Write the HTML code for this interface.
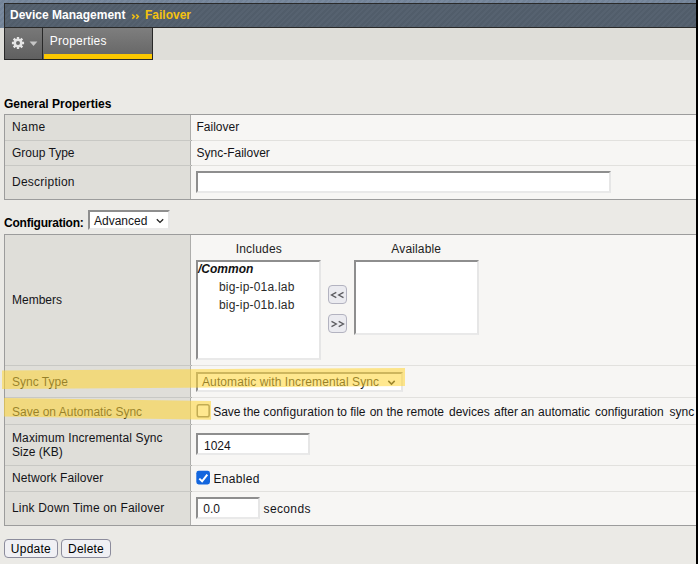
<!DOCTYPE html>
<html><head><meta charset="utf-8">
<style>
*{box-sizing:border-box;margin:0;padding:0}
html,body{width:698px;height:564px;overflow:hidden}
body{background:#ebeae6;font-family:"Liberation Sans",sans-serif;font-size:12px;line-height:14px;color:#141418;position:relative}
.a{position:absolute;white-space:nowrap}
#topbg{left:0;top:0;width:698px;height:28px;background:#74859a;
 background-image:repeating-linear-gradient(135deg,rgba(255,255,255,0.035) 0 2px,rgba(0,0,0,0.02) 2px 4px)}
#hdr{left:4px;top:3px;width:700px;height:25px;background:#535f6d;border:1px solid #2a2a2a;
 background-image:repeating-linear-gradient(135deg,rgba(255,255,255,0.02) 0 2px,rgba(0,0,0,0.025) 2px 4px)}
#tabbar{left:0;top:28px;width:698px;height:32px;background:#dfded9}
#gear{left:4px;top:27px;width:39px;height:33px;background:linear-gradient(#787878,#606060);border:1px solid #282828}
#tab{left:42px;top:27px;width:111px;height:33px;background:linear-gradient(#7e7e7e,#646464);border:1px solid #282828}
#tab i{position:absolute;left:1px;right:0;bottom:0;height:5px;background:#fcc800}
#rb{left:696px;top:0;width:2px;height:564px;background:#000}
.box{position:absolute;left:4px;width:700px;border:1px solid #9c9c9c;background:#f7f6f4}
.lc{position:absolute;left:0;top:0;bottom:0;width:186px;background:#dfded9;border-right:1px solid #adadab}
.hl{position:absolute;left:0;width:700px;height:1px;background:linear-gradient(90deg,#c8c8c4 0,#c8c8c4 186px,#adadab 186px,#adadab 187px,#e2e1de 187px)}
.t{position:absolute;border:2px solid;border-color:#8e8e8e #e6e6e6 #e9e9e9 #8e8e8e;background:#fff}
.btn{position:absolute;border:1px solid #8c8c9c;border-radius:4px;background:#f0f0f4}
</style></head><body>
<div id="topbg" class="a"></div>
<div id="hdr" class="a"></div>
<div class="a" style="left:10px;top:8px;font-weight:bold;color:#fff">Device Management</div>
<svg class="a" style="left:131px;top:13px" width="9" height="7" viewBox="0 0 9 7"><path d="M1.3 1.4 L3.4 3.6 L1.3 5.8 M5.3 1.4 L7.4 3.6 L5.3 5.8" fill="none" stroke="#f5c20f" stroke-width="1.5"/></svg>
<div class="a" style="left:145px;top:8px;font-weight:bold;color:#f5c20f">Failover</div>
<div id="tabbar" class="a"></div>
<div id="gear" class="a"></div>
<div id="tab" class="a"><i></i></div>
<svg class="a" style="left:10px;top:35px" width="16" height="16" viewBox="-8 -8 16 16"><path d="M4.34 -1.20 L6.09 -1.17 L6.09 1.17 L4.34 1.20 L3.92 2.22 L5.13 3.48 L3.48 5.13 L2.22 3.92 L1.20 4.34 L1.17 6.09 L-1.17 6.09 L-1.20 4.34 L-2.22 3.92 L-3.48 5.13 L-5.13 3.48 L-3.92 2.22 L-4.34 1.20 L-6.09 1.17 L-6.09 -1.17 L-4.34 -1.20 L-3.92 -2.22 L-5.13 -3.48 L-3.48 -5.13 L-2.22 -3.92 L-1.20 -4.34 L-1.17 -6.09 L1.17 -6.09 L1.20 -4.34 L2.22 -3.92 L3.48 -5.13 L5.13 -3.48 L3.92 -2.22 Z M2.0 0 A2.0 2.0 0 1 0 -2.0 0 A2.0 2.0 0 1 0 2.0 0 Z" fill="#e6e6e6" fill-rule="evenodd"/></svg>
<svg class="a" style="left:29px;top:41px" width="9" height="6" viewBox="0 0 9 6"><path d="M0.6 0.6 L8.4 0.6 L4.5 4.9 Z" fill="#c6c6c6"/></svg>
<div class="a" style="left:49.8px;top:34px;color:#fff;letter-spacing:0.22px">Properties</div>

<div class="a" style="left:4px;top:97px;font-weight:bold;color:#000">General Properties</div>
<div class="box" style="top:114px;height:86px"><div class="lc"></div>
 <div class="hl" style="top:25px"></div><div class="hl" style="top:50px"></div>
</div>
<div class="a" style="left:12px;top:120px;letter-spacing:0.4px">Name</div>
<div class="a" style="left:12px;top:146px">Group Type</div>
<div class="a" style="left:12px;top:175px;letter-spacing:0.25px">Description</div>
<div class="a" style="left:196.5px;top:120px">Failover</div>
<div class="a" style="left:196.5px;top:146px">Sync-Failover</div>
<div class="t" style="left:196px;top:171px;width:415px;height:22px"></div>

<div class="a" style="left:4px;top:216px;font-weight:bold;letter-spacing:-0.22px;color:#000">Configuration:</div>
<div class="t" style="left:88px;top:210px;width:82px;height:20px"></div>
<div class="a" style="left:94px;top:214px">Advanced</div>
<svg class="a" style="left:156px;top:218px" width="8" height="6" viewBox="0 0 8 6"><path d="M0.8 1.2 L4 4.4 L7.2 1.2" fill="none" stroke="#222" stroke-width="1.3"/></svg>

<div class="box" style="top:234px;height:292px"><div class="lc"></div>
 <div class="hl" style="top:130px"></div><div class="hl" style="top:162px"></div><div class="hl" style="top:189px"></div><div class="hl" style="top:230px"></div><div class="hl" style="top:256px"></div>
</div>
<div class="a" style="left:12px;top:293px">Members</div>
<div class="a" style="left:12px;top:375px">Sync Type</div>
<div class="a" style="left:12px;top:405px">Save on Automatic Sync</div>
<div class="a" style="left:12px;top:431px;letter-spacing:0.11px">Maximum Incremental Sync</div>
<div class="a" style="left:12px;top:445px">Size (KB)</div>
<div class="a" style="left:12px;top:471px;letter-spacing:0.08px">Network Failover</div>
<div class="a" style="left:12px;top:501px;letter-spacing:0.17px">Link Down Time on Failover</div>

<!-- members -->
<div class="a" style="left:235.7px;top:242px;color:#222;letter-spacing:0.2px">Includes</div>
<div class="a" style="left:391.3px;top:242px;color:#222;letter-spacing:0.15px">Available</div>
<div class="t" style="left:196px;top:260px;width:125px;height:100px"></div>
<div class="a" style="left:198px;top:262px;font-weight:bold;font-style:italic;color:#111">/Common</div>
<div class="a" style="left:219px;top:280px;letter-spacing:0.2px;color:#2a2a2a">big-ip-01a.lab</div>
<div class="a" style="left:219px;top:298px;letter-spacing:0.2px;color:#2a2a2a">big-ip-01b.lab</div>
<div class="t" style="left:354px;top:260px;width:125px;height:75px"></div>
<div class="btn" style="left:328px;top:285px;width:19px;height:19px;border:1.5px solid #b3b3c0;background:#ebebf0"></div>
<div class="btn" style="left:328px;top:314px;width:19px;height:19px;border:1.5px solid #b3b3c0;background:#ebebf0"></div>
<svg class="a" style="left:330px;top:291px" width="15" height="8" viewBox="0 0 15 8"><path d="M6.3 1.3 L1.5 4 L6.3 6.7 M13.5 1.3 L8.7 4 L13.5 6.7" fill="none" stroke="#5c5c60" stroke-width="1.35"/></svg>
<svg class="a" style="left:330px;top:320px" width="15" height="8" viewBox="0 0 15 8"><path d="M1.5 1.3 L6.3 4 L1.5 6.7 M8.7 1.3 L13.5 4 L8.7 6.7" fill="none" stroke="#5c5c60" stroke-width="1.35"/></svg>

<!-- sync type -->
<div class="t" style="left:196px;top:372px;width:207px;height:20px"></div>
<div class="a" style="left:202px;top:375px;letter-spacing:0.1px">Automatic with Incremental Sync</div>
<svg class="a" style="left:387px;top:380px" width="10" height="7" viewBox="0 0 10 7"><path d="M1.3 0.9 L4.5 4.1 L7.7 0.9" fill="none" stroke="#222" stroke-width="1.5"/></svg>
<!-- save -->
<svg class="a" style="left:194px;top:402px" width="18" height="18" viewBox="194 402 18 18"><rect x="197.25" y="404.75" width="11.9" height="12" rx="1.8" fill="#fff" stroke="#767676" stroke-width="1.5"/></svg>
<div class="a" id="long" style="left:0;top:405px;width:698px;height:14px">
<span class="a" style="left:213.2px">Save</span><span class="a" style="left:243.3px">the</span><span class="a" style="left:263.3px;letter-spacing:0.15px">configuration</span><span class="a" style="left:337px">to</span><span class="a" style="left:350.2px">file</span><span class="a" style="left:369.7px">on</span><span class="a" style="left:386.4px">the</span><span class="a" style="left:406.6px">remote</span><span class="a" style="left:449px">devices</span><span class="a" style="left:494px">after</span><span class="a" style="left:520.8px">an</span><span class="a" style="left:538.1px">automatic</span><span class="a" style="left:595px">configuration</span><span class="a" style="left:669.6px">sync</span>
</div>
<!-- max -->
<div class="t" style="left:196px;top:433px;width:114px;height:22px"></div>
<div class="a" style="left:204px;top:438.5px">1024</div>
<!-- network -->
<svg class="a" style="left:196px;top:470px" width="16" height="16" viewBox="-0.5 -1 16 16"><rect x="-0.2" y="-0.2" width="13.7" height="13.7" rx="2.4" fill="#1366de"/><path d="M2.8 7.6 L5.6 10.3 L10.8 3.7" fill="none" stroke="#fff" stroke-width="2"/></svg>
<div class="a" style="left:213.5px;top:472px;letter-spacing:0.3px">Enabled</div>
<!-- link -->
<div class="t" style="left:196px;top:497px;width:64px;height:22px"></div>
<div class="a" style="left:203.3px;top:502px">0.0</div>
<div class="a" style="left:263.5px;top:502px;letter-spacing:0.38px">seconds</div>

<svg class="a" style="left:0;top:360px" width="698" height="70" viewBox="0 360 698 70">
<polygon points="2,370.5 405,367.9 405,386.1 2,388.9" fill="rgba(255,214,55,0.56)"/>
<polygon points="4,397.9 211,401 211,419.8 4,416.6" fill="rgba(255,214,55,0.56)"/>
</svg>

<div class="btn" style="left:4px;top:539px;width:54px;height:19px"></div>
<div class="btn" style="left:61px;top:539px;width:50px;height:19px"></div>
<div class="a" style="left:10.8px;top:541.5px;color:#000;letter-spacing:0.25px">Update</div>
<div class="a" style="left:68.1px;top:541.5px;color:#000;letter-spacing:0.2px">Delete</div>
<div id="rb" class="a"></div>
</body></html>
